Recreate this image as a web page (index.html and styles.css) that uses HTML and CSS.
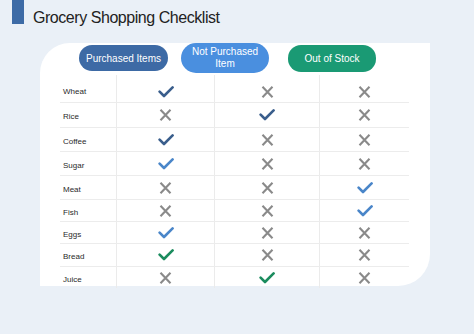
FILE: index.html
```html
<!DOCTYPE html>
<html>
<head>
<meta charset="utf-8">
<link rel="stylesheet" href="styles.css">
</head>
<body>
<svg width="0" height="0" class="defs">
  <defs>
    <symbol id="chk" viewBox="0 0 16 12"><path d="M1.6 5.6 L6 10 L14.6 1.4" fill="none" stroke="currentColor" stroke-width="2.6" stroke-linecap="round" stroke-linejoin="round"/></symbol>
    <symbol id="x" viewBox="0 0 13 12"><path d="M1.5 0.8 L11.5 11.2 M11.5 0.8 L1.5 11.2" fill="none" stroke="currentColor" stroke-width="2.1"/></symbol>
  </defs>
</svg>
<div class="header">
  <div class="bar"></div>
  <div class="title">Grocery Shopping Checklist</div>
</div>
<div class="card">
  <div class="pills">
    <div class="pill p1">Purchased Items</div>
    <div class="pill p2">Not Purchased<br>Item</div>
    <div class="pill p3">Out of Stock</div>
  </div>
  <div class="table">
    <div class="row"><div class="lbl">Wheat</div><div class="c"><svg class="i ck dk"><use href="#chk"/></svg></div><div class="c"><svg class="i xx"><use href="#x"/></svg></div><div class="c"><svg class="i xx"><use href="#x"/></svg></div></div>
    <div class="row"><div class="lbl">Rice</div><div class="c"><svg class="i xx"><use href="#x"/></svg></div><div class="c"><svg class="i ck dk"><use href="#chk"/></svg></div><div class="c"><svg class="i xx"><use href="#x"/></svg></div></div>
    <div class="row"><div class="lbl">Coffee</div><div class="c"><svg class="i ck dk"><use href="#chk"/></svg></div><div class="c"><svg class="i xx"><use href="#x"/></svg></div><div class="c"><svg class="i xx"><use href="#x"/></svg></div></div>
    <div class="row"><div class="lbl">Sugar</div><div class="c"><svg class="i ck lt"><use href="#chk"/></svg></div><div class="c"><svg class="i xx"><use href="#x"/></svg></div><div class="c"><svg class="i xx"><use href="#x"/></svg></div></div>
    <div class="row"><div class="lbl">Meat</div><div class="c"><svg class="i xx"><use href="#x"/></svg></div><div class="c"><svg class="i xx"><use href="#x"/></svg></div><div class="c"><svg class="i ck lt"><use href="#chk"/></svg></div></div>
    <div class="row"><div class="lbl">Fish</div><div class="c"><svg class="i xx"><use href="#x"/></svg></div><div class="c"><svg class="i xx"><use href="#x"/></svg></div><div class="c"><svg class="i ck lt"><use href="#chk"/></svg></div></div>
    <div class="row"><div class="lbl">Eggs</div><div class="c"><svg class="i ck lt"><use href="#chk"/></svg></div><div class="c"><svg class="i xx"><use href="#x"/></svg></div><div class="c"><svg class="i xx"><use href="#x"/></svg></div></div>
    <div class="row"><div class="lbl">Bread</div><div class="c"><svg class="i ck gr"><use href="#chk"/></svg></div><div class="c"><svg class="i xx"><use href="#x"/></svg></div><div class="c"><svg class="i xx"><use href="#x"/></svg></div></div>
    <div class="row"><div class="lbl">Juice</div><div class="c"><svg class="i xx"><use href="#x"/></svg></div><div class="c"><svg class="i ck gr"><use href="#chk"/></svg></div><div class="c"><svg class="i xx"><use href="#x"/></svg></div></div>
  </div>
</div>
</body>
</html>
```
FILE: styles.css
```css
html, body {
  margin: 0;
  padding: 0;
}
body {
  width: 474px;
  height: 334px;
  background: #eaf0f7;
  font-family: "Liberation Sans", Arial, sans-serif;
  overflow: hidden;
}
.defs {
  display: block;
  width: 0;
  height: 0;
  overflow: hidden;
}
.header {
  display: flex;
  align-items: flex-start;
  height: 28px;
}
.bar {
  width: 12px;
  height: 24px;
  margin-left: 12px;
  background: #3d6ba6;
}
.title {
  margin-left: 9px;
  margin-top: 8px;
  font-size: 16px;
  line-height: 20px;
  letter-spacing: -0.45px;
  color: #222;
}
.card {
  margin-top: 32px;
  margin-left: 40px;
  width: 390px;
  height: 243px;
  box-sizing: border-box;
  background: #fff;
  border-radius: 30px 0 32px 0;
}
.pills {
  display: flex;
  align-items: center;
  height: 30px;
  margin-top: -17px;
  padding-left: 39px;
}
.pill {
  display: flex;
  align-items: center;
  justify-content: center;
  text-align: center;
  color: #fff;
  font-size: 10px;
  line-height: 11px;
  width: 89px;
  height: 26px;
  border-radius: 13px;
}
.p1 {
  background: #3d6aa5;
}
.p2 {
  margin-left: 13px;
  width: 88px;
  height: 30px;
  border-radius: 15px;
  background: #4a8fdf;
  line-height: 12px;
}
.p3 {
  margin-left: 19px;
  width: 88px;
  height: 27px;
  background: #1a9a74;
}
.table {
  margin-top: 2px;
  margin-left: 20px;
  width: 349px;
}
.row {
  display: grid;
  grid-template-columns: 56px 98px 105px 90px;
  box-sizing: border-box;
  height: 24px;
}
.row + .row {
  border-top: 1px solid #ececec;
}
.row:nth-child(1) { height: 27px; }
.row:nth-child(1) .lbl,
.row:nth-child(1) .c { padding-top: 6px; }
.row:nth-child(2) { height: 25px; }
.row:nth-child(6),
.row:nth-child(7),
.row:nth-child(9) { height: 22px; }
.row:nth-child(8) { height: 23px; }
.lbl {
  display: flex;
  align-items: center;
  padding-left: 3px;
  padding-top: 3px;
  font-size: 8px;
  color: #2a2a2a;
}
.c {
  display: flex;
  align-items: center;
  justify-content: center;
  border-left: 1px solid #ebebeb;
}
.i {
  display: block;
}
.ck {
  width: 16px;
  height: 12px;
}
.xx {
  width: 13px;
  height: 12px;
  color: #8a8a8a;
}
.dk { color: #3a5e8c; }
.lt { color: #4a86c9; }
.gr { color: #1b8c5e; }
```
